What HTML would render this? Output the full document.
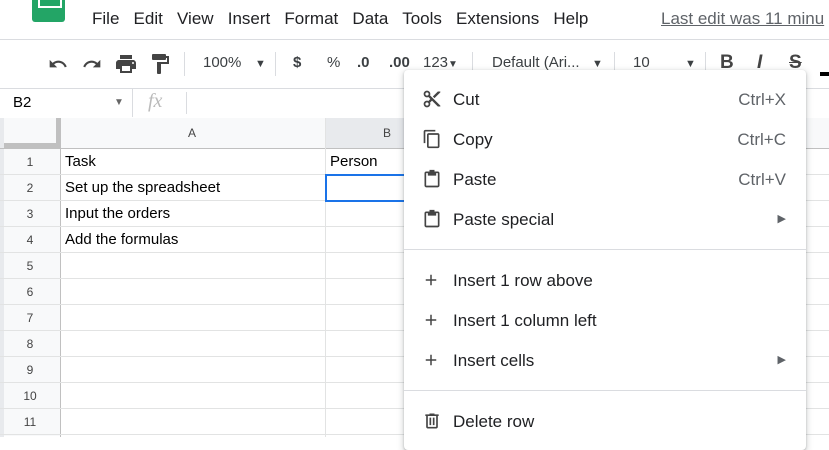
<!DOCTYPE html><html><head><style>
body{margin:0;width:829px;height:437px;overflow:hidden;background:#fff;font-family:"Liberation Sans",Arial,sans-serif;position:relative}
.a{position:absolute;white-space:nowrap}
.t{position:absolute;white-space:nowrap;top:54px;font-size:15px;color:#3c4043}
.hl{position:absolute;left:0;width:829px;height:1px;background:#e2e3e3}
.vl{position:absolute;top:118px;width:1px;height:319px;background:#e2e3e3}
.rn{position:absolute;left:0;width:60px;text-align:center;font-size:12px;color:#444}
.ct{position:absolute;left:65px;font-size:15px;color:#000}
.mi{position:absolute;left:49px;font-size:17px;color:#202124}
.sc{position:absolute;right:20px;font-size:17px;color:#5f6368}
.ic{position:absolute;left:18px}
</style></head><body>
<div class="a" style="left:32px;top:-10px;width:33px;height:32px;background:#23a566;border-radius:3px"></div>
<div class="a" style="left:38px;top:-6px;width:20px;height:12px;border:2px solid #fff;border-top:none"></div>
<div class="a" style="top:9px;left:92px;font-size:17px;color:#202124">File&nbsp;&nbsp; Edit&nbsp;&nbsp; View&nbsp;&nbsp; Insert&nbsp;&nbsp; Format&nbsp;&nbsp; Data&nbsp;&nbsp; Tools&nbsp;&nbsp; Extensions&nbsp;&nbsp; Help</div>
<div class="a" style="top:9px;left:661px;font-size:17px;color:#5f6368;text-decoration:underline">Last edit was 11 minu</div>
<div class="hl" style="top:39px;background:#dadce0"></div>
<svg class="a" style="left:46px;top:54px" width="24" height="20" viewBox="0 0 24 24" fill="#444"><path d="M12.5 8c-2.65 0-5.05.99-6.9 2.6L2 7v9h9l-3.62-3.62c1.39-1.16 3.16-1.88 5.12-1.88 3.54 0 6.55 2.31 7.6 5.5l2.37-.78C21.08 11.03 17.15 8 12.5 8z"/></svg>
<svg class="a" style="left:80px;top:54px" width="24" height="20" viewBox="0 0 24 24" fill="#444"><path d="M18.4 10.6C16.55 8.99 14.15 8 11.5 8c-4.65 0-8.58 3.03-9.96 7.22L3.9 16c1.05-3.19 4.05-5.5 7.6-5.5 1.95 0 3.73.72 5.12 1.88L13 16h9V7l-3.6 3.6z"/></svg>
<svg class="a" style="left:114px;top:52px" width="24" height="24" viewBox="0 0 24 24" fill="#444"><path d="M19 8H5c-1.66 0-3 1.34-3 3v6h4v4h12v-4h4v-6c0-1.66-1.34-3-3-3zm-3 11H8v-5h8v5zm3-7c-.55 0-1-.45-1-1s.45-1 1-1 1 .45 1 1-.45 1-1 1zm-1-9H6v4h12V3z"/></svg>
<svg class="a" style="left:148px;top:52px" width="24" height="24" viewBox="0 0 24 24" fill="#444"><path d="M18 4V3c0-.55-.45-1-1-1H5c-.55 0-1 .45-1 1v4c0 .55.45 1 1 1h12c.55 0 1-.45 1-1V6h1v4H9v11c0 .55.45 1 1 1h2c.55 0 1-.45 1-1v-9h8V4h-3z"/></svg>
<div class="a" style="left:184px;top:52px;width:1px;height:24px;background:#dadce0"></div>
<div class="t" style="left:203px">100%</div><div class="t" style="left:255px;font-size:11px;top:58px">▼</div>
<div class="a" style="left:275px;top:52px;width:1px;height:24px;background:#dadce0"></div>
<div class="t" style="left:293px;font-weight:bold">$</div>
<div class="t" style="left:327px">%</div>
<div class="t" style="left:357px;font-weight:bold">.0</div>
<div class="t" style="left:389px;font-weight:bold">.00</div>
<div class="t" style="left:423px">123<span style="font-size:10px">▼</span></div>
<div class="a" style="left:472px;top:52px;width:1px;height:24px;background:#dadce0"></div>
<div class="t" style="left:492px">Default (Ari...</div><div class="t" style="left:592px;font-size:11px;top:58px">▼</div>
<div class="a" style="left:614px;top:52px;width:1px;height:24px;background:#dadce0"></div>
<div class="t" style="left:633px">10</div><div class="t" style="left:685px;font-size:11px;top:58px">▼</div>
<div class="a" style="left:705px;top:52px;width:1px;height:24px;background:#dadce0"></div>
<div class="a" style="top:52px;left:720px;font-size:19px;color:#444;font-weight:bold">B</div>
<div class="a" style="top:52px;left:757px;font-size:19px;color:#444;font-weight:bold;font-style:italic">I</div>
<div class="a" style="top:52px;left:789px;font-size:19px;color:#444;font-weight:bold;text-decoration:line-through">S</div>
<div class="hl" style="top:88px;background:#dadce0"></div>
<div class="a" style="top:94px;left:13px;font-size:15px;color:#000">B2</div>
<div class="a" style="top:97px;left:114px;font-size:10px;color:#666">▼</div>
<div class="a" style="left:132px;top:88px;width:1px;height:29px;background:#dadce0"></div>
<div class="a" style="top:90px;left:148px;font-size:20px;color:#bbb;font-style:italic;font-family:'Liberation Serif',serif">fx</div>
<div class="a" style="left:186px;top:92px;width:1px;height:22px;background:#dadce0"></div>
<div class="a" style="left:0;top:118px;width:829px;height:30px;background:#f8f9fa"></div>
<div class="a" style="left:326px;top:118px;width:90px;height:30px;background:#e8eaed"></div>
<div class="a" style="left:0;top:118px;width:60px;height:318px;background:#f8f9fa"></div>
<div class="a" style="left:0;top:118px;width:4px;height:319px;background:#e8eaed"></div>
<div class="a" style="left:56px;top:118px;width:5px;height:30px;background:#c0c0c0"></div>
<div class="a" style="left:4px;top:143px;width:57px;height:5px;background:#c0c0c0"></div>
<div class="hl" style="top:148px;background:#c0c0c0"></div>
<div class="vl" style="left:60px;background:#c0c0c0"></div>
<div class="vl" style="left:325px"></div>
<div class="hl" style="top:174px"></div><div class="hl" style="top:200px"></div><div class="hl" style="top:226px"></div><div class="hl" style="top:252px"></div><div class="hl" style="top:278px"></div><div class="hl" style="top:304px"></div><div class="hl" style="top:330px"></div><div class="hl" style="top:356px"></div><div class="hl" style="top:382px"></div><div class="hl" style="top:408px"></div><div class="hl" style="top:434px"></div>
<div class="a" style="top:126px;left:188px;font-size:12px;color:#444">A</div>
<div class="a" style="top:126px;left:383px;font-size:12px;color:#444">B</div>
<div class="rn" style="top:155px">1</div><div class="rn" style="top:181px">2</div><div class="rn" style="top:207px">3</div><div class="rn" style="top:233px">4</div><div class="rn" style="top:259px">5</div><div class="rn" style="top:285px">6</div><div class="rn" style="top:311px">7</div><div class="rn" style="top:337px">8</div><div class="rn" style="top:363px">9</div><div class="rn" style="top:389px">10</div><div class="rn" style="top:415px">11</div>
<div class="ct" style="top:153px">Task</div>
<div class="ct" style="top:153px;left:330px">Person</div>
<div class="ct" style="top:179px">Set up the spreadsheet</div>
<div class="ct" style="top:205px">Input the orders</div>
<div class="ct" style="top:231px">Add the formulas</div>
<div class="a" style="left:325px;top:174px;width:90px;height:24px;border:2px solid #1a73e8"></div>
<div class="a" style="left:404px;top:70px;width:402px;height:380px;background:#fff;border-radius:4px;box-shadow:0 2px 6px 2px rgba(60,64,67,.15),0 1px 2px rgba(60,64,67,.3)">
<svg class="ic" style="top:19px" width="20" height="20" viewBox="0 0 24 24" fill="#444"><path d="M9.64 7.64c.23-.5.36-1.05.36-1.64 0-2.21-1.790-4-4-4S2 3.79 2 6s1.79 4 4 4c.59 0 1.14-.13 1.64-.36L10 12l-2.36 2.36C7.14 14.13 6.59 14 6 14c-2.21 0-4 1.79-4 4s1.79 4 4 4 4-1.79 4-4c0-.59-.13-1.140-.36-1.64L12 14l7 7h3v-1L9.64 7.64zM6 8c-1.1 0-2-.89-2-2s.9-2 2-2 2 .89 2 2-.9 2-2 2zm0 12c-1.1 0-2-.89-2-2s.9-2 2-2 2 .89 2 2-.9 2-2 2zM19 3l-6 6 2 2 7-7V3z"/></svg>
<div class="mi" style="top:20px">Cut</div><div class="sc" style="top:20px">Ctrl+X</div>
<svg class="ic" style="top:59px" width="20" height="20" viewBox="0 0 24 24" fill="#444"><path d="M16 1H4c-1.1 0-2 .9-2 2v14h2V3h12V1zm3 4H8c-1.1 0-2 .9-2 2v14c0 1.1.9 2 2 2h11c1.1 0 2-.9 2-2V7c0-1.1-.9-2-2-2zm0 16H8V7h11v14z"/></svg>
<div class="mi" style="top:60px">Copy</div><div class="sc" style="top:60px">Ctrl+C</div>
<svg class="ic" style="top:99px" width="20" height="20" viewBox="0 0 24 24" fill="#444"><path d="M19 3h-4V1H9v2H5c-1.1 0-2 .9-2 2v15c0 1.1.9 2 2 2h14c1.1 0 2-.9 2-2V5c0-1.1-.9-2-2-2zm0 17H5V5h2v3h10V5h2v15z"/></svg>
<div class="mi" style="top:100px">Paste</div><div class="sc" style="top:100px">Ctrl+V</div>
<svg class="ic" style="top:139px" width="20" height="20" viewBox="0 0 24 24" fill="#444"><path d="M19 3h-4V1H9v2H5c-1.1 0-2 .9-2 2v15c0 1.1.9 2 2 2h14c1.1 0 2-.9 2-2V5c0-1.1-.9-2-2-2zm0 17H5V5h2v3h10V5h2v15z"/></svg>
<div class="mi" style="top:140px">Paste special</div><div class="sc" style="top:142px;font-size:11px">▶</div>
<div style="position:absolute;left:0;top:179px;width:402px;height:1px;background:#dadce0"></div>
<svg class="ic" style="top:201px" width="18" height="18" viewBox="0 0 24 24" fill="#444"><path d="M19 13h-6v6h-2v-6H5v-2h6V5h2v6h6v2z"/></svg>
<div class="mi" style="top:201px">Insert 1 row above</div>
<svg class="ic" style="top:241px" width="18" height="18" viewBox="0 0 24 24" fill="#444"><path d="M19 13h-6v6h-2v-6H5v-2h6V5h2v6h6v2z"/></svg>
<div class="mi" style="top:241px">Insert 1 column left</div>
<svg class="ic" style="top:281px" width="18" height="18" viewBox="0 0 24 24" fill="#444"><path d="M19 13h-6v6h-2v-6H5v-2h6V5h2v6h6v2z"/></svg>
<div class="mi" style="top:281px">Insert cells</div><div class="sc" style="top:283px;font-size:11px">▶</div>
<div style="position:absolute;left:0;top:320px;width:402px;height:1px;background:#dadce0"></div>
<svg class="ic" style="top:341px" width="20" height="20" viewBox="0 0 24 24" fill="#444"><path d="M15 4V3H9v1H4v2h1v13c0 1.1.9 2 2 2h10c1.1 0 2-.9 2-2V6h1V4h-5zm2 15H7V6h10v13zM9 8h2v9H9zm4 0h2v9h-2z"/></svg>
<div class="mi" style="top:342px">Delete row</div>
</div>
<div class="a" style="left:820px;top:72px;width:9px;height:4px;background:#000"></div>
</body></html>
